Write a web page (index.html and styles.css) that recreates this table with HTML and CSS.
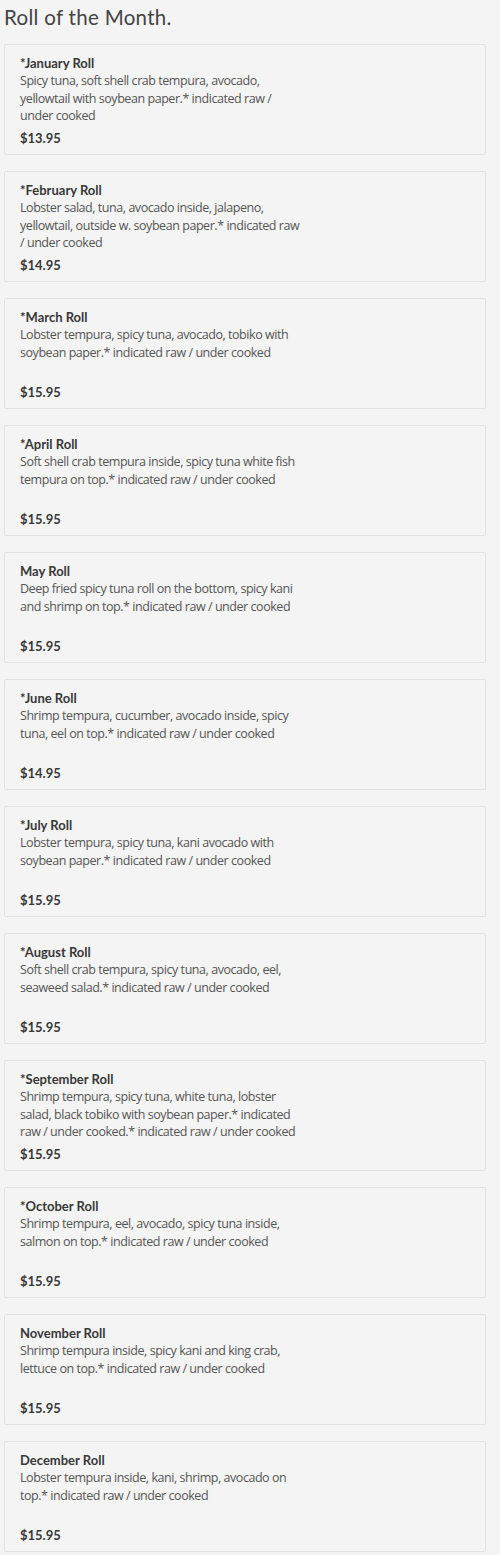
FILE: index.html
```html
<!DOCTYPE html>
<html>
<head>
<meta charset="utf-8">
<link rel="stylesheet" href="styles.css">
</head>
<body>
<h1 class="title">Roll of the Month.</h1>
<div class="list">
  <div class="card"><div class="name">*January Roll</div><div class="desc">Spicy tuna, soft shell crab tempura, avocado, yellowtail with soybean paper.* indicated raw / under cooked</div><div class="price">$13.95</div></div>
  <div class="card"><div class="name">*February Roll</div><div class="desc">Lobster salad, tuna, avocado inside, jalapeno, yellowtail, outside w. soybean paper.* indicated raw / under cooked</div><div class="price">$14.95</div></div>
  <div class="card"><div class="name">*March Roll</div><div class="desc">Lobster tempura, spicy tuna, avocado, tobiko with soybean paper.* indicated raw / under cooked</div><div class="price">$15.95</div></div>
  <div class="card"><div class="name">*April Roll</div><div class="desc">Soft shell crab tempura inside, spicy tuna white fish tempura on top.* indicated raw / under cooked</div><div class="price">$15.95</div></div>
  <div class="card"><div class="name">May Roll</div><div class="desc">Deep fried spicy tuna roll on the bottom, spicy kani and shrimp on top.* indicated raw / under cooked</div><div class="price">$15.95</div></div>
  <div class="card"><div class="name">*June Roll</div><div class="desc">Shrimp tempura, cucumber, avocado inside, spicy tuna, eel on top.* indicated raw / under cooked</div><div class="price">$14.95</div></div>
  <div class="card"><div class="name">*July Roll</div><div class="desc">Lobster tempura, spicy tuna, kani avocado with soybean paper.* indicated raw / under cooked</div><div class="price">$15.95</div></div>
  <div class="card"><div class="name">*August Roll</div><div class="desc">Soft shell crab tempura, spicy tuna, avocado, eel, seaweed salad.* indicated raw / under cooked</div><div class="price">$15.95</div></div>
  <div class="card"><div class="name">*September Roll</div><div class="desc">Shrimp tempura, spicy tuna, white tuna, lobster salad, black tobiko with soybean paper.* indicated raw / under cooked.* indicated raw / under cooked</div><div class="price">$15.95</div></div>
  <div class="card"><div class="name">*October Roll</div><div class="desc">Shrimp tempura, eel, avocado, spicy tuna inside, salmon on top.* indicated raw / under cooked</div><div class="price">$15.95</div></div>
  <div class="card"><div class="name">November Roll</div><div class="desc">Shrimp tempura inside, spicy kani and king crab, lettuce on top.* indicated raw / under cooked</div><div class="price">$15.95</div></div>
  <div class="card"><div class="name">December Roll</div><div class="desc">Lobster tempura inside, kani, shrimp, avocado on top.* indicated raw / under cooked</div><div class="price">$15.95</div></div>
</div>
</body>
</html>
```
FILE: styles.css
```css
html, body {
  margin: 0;
  padding: 0;
  background: #f4f4f4;
}
body {
  padding: 0 14px 0 4px;
}
.title {
  margin: 0;
  padding-top: 4px;
  height: 40px;
  font-family: "Lato", "Inter", sans-serif;
  font-weight: 400;
  font-size: 20.5px;
  line-height: 26px;
  color: #444;
  letter-spacing: 0.3px;
}
.list {
  display: flex;
  flex-direction: column;
  gap: 16px;
}
.card {
  height: 111px;
  box-sizing: border-box;
  border: 1px solid #e2e2e2;
  border-radius: 2px;
  padding: 9px 16px 7px 15px;
  display: flex;
  flex-direction: column;
  background: #f4f4f4;
}
.name {
  font-family: "Lato", "Inter", sans-serif;
  font-weight: 700;
  font-size: 13px;
  line-height: 18px;
  color: #383838;
}
.desc {
  font-family: "Open Sans", sans-serif;
  font-size: 12.5px;
  letter-spacing: -0.45px;
  line-height: 17.5px;
  color: #555;
  max-width: 282px;
}
.price {
  margin-top: auto;
  font-family: "Lato", "Inter", sans-serif;
  font-weight: 700;
  font-size: 13px;
  line-height: 18px;
  color: #383838;
}
```
